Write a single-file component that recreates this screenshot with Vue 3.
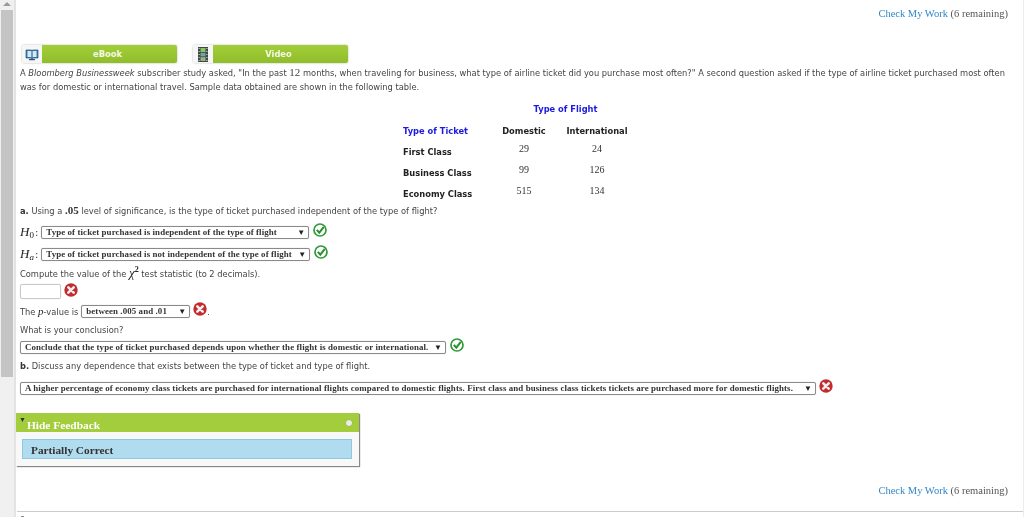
<script setup>
const rows = [
  ['First Class', '29', '24'],
  ['Business Class', '99', '126'],
  ['Economy Class', '515', '134'],
]
</script>

<template>
  <div class="page">
    <div class="scrollbar">
      <div class="arrow"></div>
      <div class="thumb"></div>
    </div>
    <main class="main">
      <div class="check-row"><a class="link">Check My Work</a> (6 remaining)</div>

      <div class="tools">
        <div class="tool">
          <span class="tool-icon">
            <svg width="14" height="13" viewBox="0 0 14 13">
              <path d="M1 2h5.500l.5 1 .5-1H13v8H8l-1 1-1-1H1z" fill="#3f7fb5" stroke="#24527c" stroke-width=".7"/>
              <path d="M2.500 3h3.800v6H2.500zM7.700 3h3.800v6H7.700z" fill="#d7e8f3"/>
              <path d="M4 11h6v1.200H4z" fill="#24527c"/>
            </svg>
          </span>
          <span class="tool-label">eBook</span>
        </div>
        <div class="tool">
          <span class="tool-icon">
            <svg width="10" height="15" viewBox="0 0 10 15">
              <rect width="10" height="15" fill="#3c4a45"/>
              <rect x="2.500" y="1" width="5" height="4" fill="#8fc06a"/>
              <rect x="2.500" y="5.800" width="5" height="3.600" fill="#6fa6a0"/>
              <rect x="2.500" y="10.200" width="5" height="3.800" fill="#9fb08c"/>
              <path d="M.6 1h1v1h-1zM.6 4h1v1h-1zM.6 7h1v1h-1zM.6 10h1v1h-1zM.6 13h1v1h-1zM8.400 1h1v1h-1zM8.400 4h1v1h-1zM8.400 7h1v1h-1zM8.400 10h1v1h-1zM8.400 13h1v1h-1z" fill="#dfe6e2"/>
            </svg>
          </span>
          <span class="tool-label">Video</span>
        </div>
      </div>

      <p class="para">A <i>Bloomberg Businessweek</i> subscriber study asked, "In the past <span class="num">12</span> months, when traveling for business, what type of airline ticket did you purchase most often?" A second question asked if the type of airline ticket purchased most often was for domestic or international travel. Sample data obtained are shown in the following table.</p>

      <div class="data">
        <div></div>
        <div class="blue flight">Type of Flight</div>
        <div class="blue head-cell">Type of Ticket</div>
        <div class="head-cell center">Domestic</div>
        <div class="head-cell center">International</div>
        <template v-for="r in rows" :key="r[0]">
          <div class="row-name">{{ r[0] }}</div>
          <div class="value">{{ r[1] }}</div>
          <div class="value">{{ r[2] }}</div>
        </template>
      </div>

      <p class="line part-a"><b>a.</b> Using a <span class="num bold">.05</span> level of significance, is the type of ticket purchased independent of the type of flight?</p>

      <div class="line hyp h0">
        <span class="math"><i>H</i><sub>0</sub></span><span class="colon">:</span>
        <span class="sel w-h0"><span>Type of ticket purchased is independent of the type of flight</span><em>▼</em></span>
        <svg class="mark" viewBox="0 0 14 14"><use href="#ok" /></svg>
      </div>
      <div class="line hyp ha">
        <span class="math"><i>H</i><sub><i>a</i></sub></span><span class="colon">:</span>
        <span class="sel w-ha"><span>Type of ticket purchased is not independent of the type of flight</span><em>▼</em></span>
        <svg class="mark" viewBox="0 0 14 14"><use href="#ok" /></svg>
      </div>

      <p class="line compute">Compute the value of the <span class="chi"><i>χ</i><sup>2</sup></span> test statistic (to 2 decimals).</p>

      <div class="line answer">
        <span class="input"></span>
        <svg class="mark x-mark" viewBox="0 0 14 14"><use href="#bad" /></svg>
      </div>

      <div class="line pvalue">
        <span>The <span class="pv"><i>p</i></span>-value is</span>
        <span class="sel w-p"><span>between .005 and .01</span><em>▼</em></span>
        <svg class="mark x-mark" viewBox="0 0 14 14"><use href="#bad" /></svg><span class="dot">.</span>
      </div>

      <p class="line what">What is your conclusion?</p>

      <div class="line concl">
        <span class="sel w-c"><span>Conclude that the type of ticket purchased depends upon whether the flight is domestic or international.</span><em>▼</em></span>
        <svg class="mark" viewBox="0 0 14 14"><use href="#ok" /></svg>
      </div>

      <p class="line part-b"><b>b.</b> Discuss any dependence that exists between the type of ticket and type of flight.</p>

      <div class="line discuss">
        <span class="sel w-d"><span>A higher percentage of economy class tickets are purchased for international flights compared to domestic flights. First class and business class tickets tickets are purchased more for domestic flights.</span><em>▼</em></span>
        <svg class="mark x-mark" viewBox="0 0 14 14"><use href="#bad" /></svg>
      </div>

      <section class="feedback">
        <header class="fb-head">
          <span class="fb-arrow">▼</span>
          <span class="fb-title">Hide Feedback</span>
          <span class="fb-knob"></span>
        </header>
        <div class="fb-body"><div class="fb-msg">Partially Correct</div></div>
      </section>

      <div class="check-row bottom"><a class="link">Check My Work</a> (6 remaining)</div>
      <div class="foot-rule"><span class="foot-tick"></span></div>
    </main>

    <svg class="defs" width="0" height="0">
      <defs>
        <g id="ok">
          <circle cx="7" cy="7" r="6" fill="#fff" stroke="#2f9a36" stroke-width="1.700"/>
          <path d="M3.800 6.800 6.300 9.700 10.800 3.800" fill="none" stroke="#2a8f32" stroke-width="2"/>
        </g>
        <g id="bad">
          <circle cx="7" cy="7" r="6.700" fill="#c22c2e"/>
          <path d="M4.300 4.300 9.700 9.700M9.700 4.300 4.300 9.700" stroke="#f4eeee" stroke-width="2.600" stroke-linecap="round"/>
        </g>
      </defs>
    </svg>
  </div>
</template>

<style scoped>
.page {
  display: flex;
  width: 1024px;
  height: 517px;
  overflow: hidden;
  background: #fff;
  font-family: "DejaVu Sans", Verdana, sans-serif;
  font-size: 8.3px;
  color: #444;
}
.defs { position: absolute; }
.scrollbar {
  width: 14px;
  flex: none;
  background: #f0f0f0;
  border-right: 2px solid #e3e3e3;
  box-sizing: content-box;
}
.arrow {
  width: 0;
  height: 0;
  margin: 2px auto 0;
  border: 4px solid transparent;
  border-top: 0;
  border-bottom: 4px solid #999;
}
.thumb {
  width: 12px;
  height: 367px;
  margin: 4px 0 0 1px;
  background: #c4c4c4;
}
.main {
  flex: 1;
  min-width: 0;
  padding: 8px 0 0 4px;
  border-right: 1px solid #ececec;
  position: relative;
  filter: blur(.3px);
}
.check-row {
  font-family: "Liberation Serif", serif;
  font-size: 10.5px;
  line-height: 12px;
  text-align: right;
  padding-right: 15px;
  color: #555;
}
.link { color: #2f86c8; }
.tools {
  display: flex;
  gap: 16px;
  margin-top: 25px;
  margin-left: 2px;
}
.tool {
  display: flex;
  width: 155px;
  height: 18px;
  border-radius: 2px;
  box-shadow: 0 0 2px #aaa;
}
.tool-icon {
  width: 20px;
  display: flex;
  align-items: center;
  justify-content: center;
  background: #f6f6f6;
}
.tool-label {
  flex: 1;
  text-align: center;
  line-height: 18px;
  font-weight: 700;
  color: #f4f9e6;
  background: linear-gradient(#a3ce3a, #90bd2a);
  border-radius: 0 2px 2px 0;
  padding-right: 4px;
}
.para {
  margin: 2px 0 0;
  line-height: 14px;
  padding-right: 14px;
}
.num { font-family: "Liberation Serif", serif; font-size: 11px; }
.bold { font-weight: 700; color: #333; }
.data {
  display: grid;
  grid-template-columns: 94px 54px 92px;
  margin: 9px 0 0 383px;
}
.flight {
  grid-column: span 2;
  text-align: center;
  padding-right: 9px;
  font-weight: 700;
  line-height: 12px;
  height: 22px;
}
.blue { color: #1a1ae0; }
.head-cell { font-weight: 700; line-height: 12px; height: 21px; }
.head-cell:not(.blue) { color: #222; }
.center { text-align: center; }
.row-name { font-weight: 700; color: #222; line-height: 12px; height: 21px; }
.value {
  font-family: "Liberation Serif", serif;
  font-size: 10px;
  color: #333;
  text-align: center;
  line-height: 12px;
  height: 18px;
  margin-top: -3px;
}
.line {
  margin: 0;
  display: flex;
  align-items: center;
  white-space: pre-wrap;
}
p.line { display: block; line-height: 12px; }
.part-a { margin-top: -5px; }
.part-a b, .part-b b { color: #333; }
.hyp { height: 16px; }
.h0 { margin-top: 7px; }
.ha { margin-top: 6px; }
.math {
  font-family: "Liberation Serif", serif;
  font-size: 13px;
  color: #222;
  white-space: nowrap;
}
.math sub { font-size: 9px; line-height: 0; vertical-align: -2px; }
.colon { margin: 0 3px 0 1px; font-size: 10px; }
.sel {
  display: inline-flex;
  align-items: center;
  justify-content: space-between;
  box-sizing: border-box;
  height: 13px;
  padding: 0 3px 0 4px;
  border: 1px solid #8a8a8a;
  border-radius: 2px;
  background: #fff;
  box-shadow: 0 0 1px #bbb;
  font-family: "Liberation Serif", serif;
  font-size: 8.9px;
  font-weight: 700;
  letter-spacing: .1px;
  color: #333;
  white-space: nowrap;
}
.sel em { font-style: normal; font-size: 8px; color: #222; }
.w-h0 { width: 268px; }
.w-ha { width: 269px; }
.w-p { width: 109px; margin-left: 3px; }
.w-c { width: 426px; }
.w-d { width: 796px; }
.mark { width: 14px; height: 14px; margin: -4px 0 0 4px; flex: none; }
.compute { margin-top: 5px; }
.chi { font-family: "Liberation Serif", serif; font-size: 13px; color: #222; }
.chi sup { font-size: 8px; line-height: 0; font-weight: 700; }
.answer { margin-top: 3px; height: 17px; }
.input {
  width: 41px;
  height: 15px;
  box-sizing: border-box;
  border: 1px solid #c8c8c8;
  border-radius: 2px;
  box-shadow: 0 0 1px #ccc;
}
.x-mark { margin-left: 3px; }
.pvalue { margin-top: 3px; height: 16px; }
.pv { font-family: "Liberation Serif", serif; font-size: 11px; color: #222; }
.dot { align-self: flex-end; line-height: 14px; }
.what { margin-top: 5px; }
.concl { margin-top: 4px; height: 14px; }
.part-b { margin-top: 6px; }
.discuss { margin-top: 9px; height: 14px; }
.feedback {
  width: 343px;
  margin: 18px 0 0 -4px;
  background: #f8f8f8;
  box-shadow: 1px 1px 1px #888;
}
.fb-head {
  position: relative;
  height: 19px;
  background: #a3cd3d;
  color: #fff;
  font-family: "Liberation Serif", serif;
  font-weight: 700;
  font-size: 11.4px;
}
.fb-title { position: absolute; left: 11px; top: 6px; line-height: 13px; }
.fb-arrow { position: absolute; left: 3px; top: 3px; font-size: 7px; line-height: 8px; color: #333; }
.fb-knob {
  position: absolute;
  right: 7px;
  top: 7px;
  width: 6px;
  height: 6px;
  border-radius: 50%;
  background: #e9eee0;
  box-shadow: 0 0 1px #777;
}
.fb-body { padding: 7px 7px 7px 6px; height: 34px; box-sizing: border-box; }
.fb-msg {
  height: 20px;
  box-sizing: border-box;
  padding-left: 8px;
  background: #b1dbee;
  border: 1px solid #8cc8e2;
  font-family: "Liberation Serif", serif;
  font-weight: 700;
  font-size: 11.3px;
  line-height: 20px;
  color: #333;
}
.bottom { margin-top: 19px; }
.foot-rule {
  position: absolute;
  left: 1px;
  right: 0;
  top: 511px;
  border-top: 1px solid #ccc;
}
.foot-tick {
  position: absolute;
  left: 4px;
  top: 4px;
  width: 3px;
  height: 2px;
  background: #888;
}
</style>

<style>
html, body { background: #fff; overflow: hidden; }
</style>
